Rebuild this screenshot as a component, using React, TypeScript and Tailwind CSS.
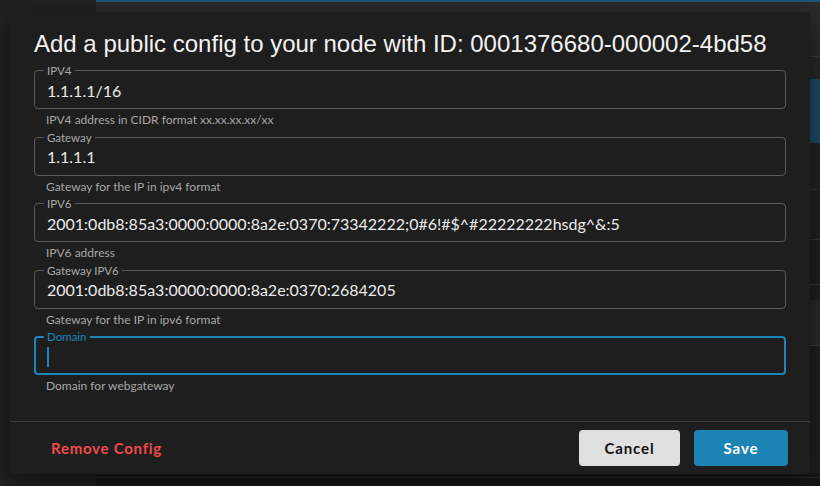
import React from "react";

type FieldProps = {
  label: string;
  value: string;
  helper: string;
  focused?: boolean;
};

function Field({ label, value, helper, focused }: FieldProps) {
  return (
    <div className="flex flex-col">
      <div
        className={
          focused
            ? "relative h-[39px] rounded-[4px] border-2 border-[#1b86b8] flex items-center px-[11px]"
            : "relative h-[39px] rounded-[4px] border border-[#585858] flex items-center px-[12px]"
        }
      >
        <span
          className={
            focused
              ? "absolute -top-[8px] left-[8px] px-[3px] bg-[#1e1e1e] text-[11.5px] leading-[13px] text-[#1b86b8]"
              : "absolute -top-[7px] left-[9px] px-[3px] bg-[#1e1e1e] text-[11.5px] leading-[13px] text-[#a9a9a9]"
          }
        >
          {label}
        </span>
        {focused ? (
          <span className="mt-[3px] h-[20px] w-[1.5px] bg-[#1b86b8]" />
        ) : (
          <span className="mt-[2px] text-[16px] leading-[20px] text-[#ececec]">{value}</span>
        )}
      </div>
      <div className="h-[27.5px] pt-[3px] pl-[12px] text-[12px] leading-[16px] text-[#a6a6a6]">
        {helper}
      </div>
    </div>
  );
}

export default function App() {
  return (
    <div
      className="relative w-[820px] h-[486px] overflow-hidden bg-[#171717]"
      style={{ fontFamily: "Lato, 'Noto Sans', sans-serif" }}
    >
      {/* Background page (dimmed) */}
      <div className="flex h-full w-full">
        <div className="w-[96px] h-full bg-[#212121]" />
        <div className="flex-1 flex flex-col">
          <div className="h-[2px] bg-[#1b5575]" />
          <div className="h-[55px] bg-[#2a2a2a] border-b border-[#3a3a3a]" />
          <div className="h-[22px] bg-[#262626]" />
          <div className="h-[64px] bg-[#1b4861]" />
          <div className="h-[47px] bg-[#222222] border-b border-[#333333]" />
          <div className="h-[50px] bg-[#202020] border-b border-[#333333]" />
          <div className="h-[45px] bg-[#1e1e1e] border-b border-[#3a3a3a]" />
          <div className="h-[15px] bg-[#1e1e1e]" />
          <div className="h-[46px] bg-[#282828] border-b border-[#3a3a3a]" />
          <div className="h-[127px] bg-[#1e1e1e]" />
          <div className="h-[5px] bg-[#171717] border-b border-[#2a2a2a]" />
          <div className="flex-1 bg-[#161616]" />
        </div>
      </div>

      {/* Dialog */}
      <div className="absolute left-[10px] top-[12px] w-[800px] h-[462px] rounded-[4px] bg-[#1e1e1e] flex flex-col shadow-[0_8px_24px_rgba(0,0,0,0.5)]">
        <div className="px-[24px] pt-[16px] flex-1 flex flex-col">
          <h2
            className="text-[24px] leading-[32px] text-[#f2f2f2] font-normal"
            style={{ fontFamily: "'Liberation Sans', Arial, sans-serif" }}
          >
            Add a public config to your node with ID: 0001376680-000002-4bd58
          </h2>
          <div className="mt-[10px] flex flex-col">
            <Field label="IPV4" value="1.1.1.1/16" helper="IPV4 address in CIDR format xx.xx.xx.xx/xx" />
            <Field label="Gateway" value="1.1.1.1" helper="Gateway for the IP in ipv4 format" />
            <Field
              label="IPV6"
              value="2001:0db8:85a3:0000:0000:8a2e:0370:73342222;0#6!#$^#22222222hsdg^&:5"
              helper="IPV6 address"
            />
            <Field
              label="Gateway IPV6"
              value="2001:0db8:85a3:0000:0000:8a2e:0370:2684205"
              helper="Gateway for the IP in ipv6 format"
            />
            <Field label="Domain" value="" helper="Domain for webgateway" focused />
          </div>
        </div>
        <div className="h-[53px] border-t border-[#383838] flex items-center pl-[41px] pr-[22px]">
          <button className="text-[15px] font-bold tracking-[0.05em] text-[#f24a4a]">Remove Config</button>
          <div className="ml-auto flex items-center gap-[14px]">
            <button className="w-[101px] h-[36px] rounded-[4px] bg-[#e0e0e0] text-[15px] font-bold tracking-[0.06em] text-[#141414]">
              Cancel
            </button>
            <button className="w-[94px] h-[36px] rounded-[4px] bg-[#1b84b4] text-[15px] font-bold tracking-[0.06em] text-white">
              Save
            </button>
          </div>
        </div>
      </div>
    </div>
  );
}
